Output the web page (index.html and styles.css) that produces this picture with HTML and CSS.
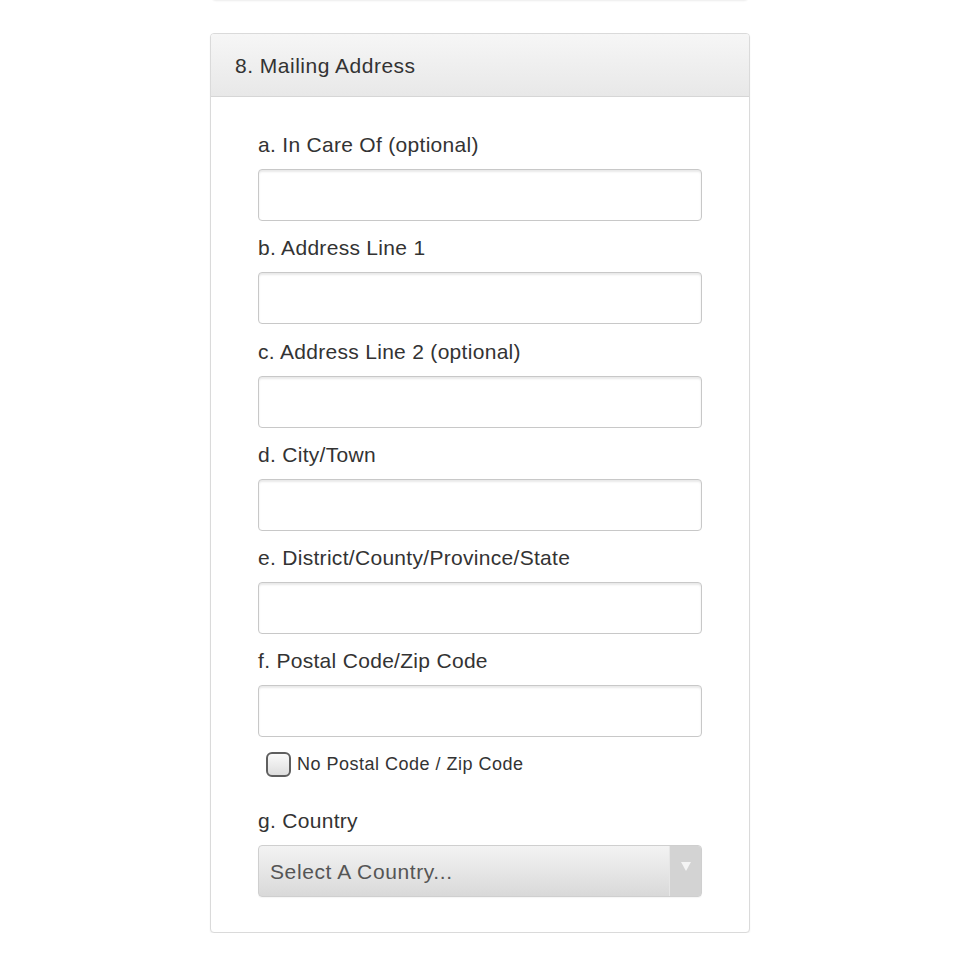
FILE: index.html
```html
<!DOCTYPE html>
<html>
<head>
<meta charset="utf-8">
<link rel="stylesheet" href="styles.css">
</head>
<body>
<div class="wrap">
  <div class="prev-panel"></div>
  <div class="panel">
    <div class="panel-heading">8. Mailing Address</div>
    <div class="panel-body">
      <div class="group">
        <label class="lbl">a. In Care Of (optional)</label>
        <div class="input"></div>
      </div>
      <div class="group">
        <label class="lbl">b. Address Line 1</label>
        <div class="input"></div>
      </div>
      <div class="group">
        <label class="lbl">c. Address Line 2 (optional)</label>
        <div class="input"></div>
      </div>
      <div class="group">
        <label class="lbl">d. City/Town</label>
        <div class="input"></div>
      </div>
      <div class="group">
        <label class="lbl">e. District/County/Province/State</label>
        <div class="input"></div>
      </div>
      <div class="group last-input">
        <label class="lbl">f. Postal Code/Zip Code</label>
        <div class="input"></div>
      </div>
      <div class="check-row">
        <span class="checkbox"></span>
        <span class="check-text">No Postal Code / Zip Code</span>
      </div>
      <div class="group country">
        <label class="lbl">g. Country</label>
        <div class="select">
          <span class="select-text">Select A Country...</span>
          <span class="select-arrow"><span class="tri"></span></span>
        </div>
      </div>
    </div>
  </div>
</div>
</body>
</html>
```

FILE: styles.css
```css
html, body {
  margin: 0;
  padding: 0;
  background: #fff;
}
body {
  font-family: "Liberation Sans", Arial, sans-serif;
  color: #333;
}
.wrap {
  width: 540px;
  margin-left: 210px;
}
.prev-panel {
  margin: -12px 2px 0 2px;
  height: 11px;
  border: 1px solid #dcdcdc;
  border-top: none;
  border-radius: 0 0 4px 4px;
  box-shadow: 0 1px 2px rgba(0,0,0,0.08);
}
.panel {
  margin-top: 33px;
  border: 1px solid #dadada;
  border-radius: 4px;
  box-shadow: 0 1px 2px rgba(0,0,0,0.06);
  background: #fff;
}
.panel-heading {
  height: 63px;
  box-sizing: border-box;
  padding: 1px 24px 0 24px;
  display: flex;
  align-items: center;
  font-size: 21px;
  letter-spacing: 0.5px;
  color: #333;
  background: linear-gradient(to bottom, #f6f6f6, #e8e8e8);
  border-bottom: 1px solid #d6d6d6;
  border-radius: 3px 3px 0 0;
}
.panel-body {
  padding: 36px 47px 35px 47px;
}
.group {
  display: flex;
  flex-direction: column;
  margin-bottom: 15.3px;
}
.lbl {
  font-size: 21px;
  letter-spacing: 0.3px;
  line-height: 24px;
  height: 24px;
  margin-bottom: 12px;
  color: #333;
}
.input {
  height: 52px;
  box-sizing: border-box;
  border: 1px solid #c8c8c8;
  border-radius: 4px;
  background: #fff;
  box-shadow: inset 0 2px 2px rgba(0,0,0,0.09);
}
.group.last-input {
  margin-bottom: 15px;
}
.check-row {
  display: flex;
  align-items: center;
  margin-left: 8px;
  height: 25px;
}
.checkbox {
  width: 25px;
  height: 25px;
  box-sizing: border-box;
  border: 2px solid #5f5f5f;
  border-radius: 6px;
  background: linear-gradient(to bottom, #fafafa, #dedede);
  margin-right: 6px;
}
.check-text {
  font-size: 18px;
  letter-spacing: 0.5px;
  color: #333;
  line-height: 20px;
  position: relative;
  top: -1px;
}
.group.country {
  margin-top: 32px;
  margin-bottom: 0;
}
.select {
  height: 52px;
  box-sizing: border-box;
  border: 1px solid #cfcfcf;
  border-radius: 4px;
  background: linear-gradient(to bottom, #f3f3f3, #d9d9d9);
  display: flex;
  align-items: stretch;
  box-shadow: 0 1px 1px rgba(0,0,0,0.04);
}
.select-text {
  flex: 1;
  display: flex;
  align-items: center;
  padding-left: 11px;
  padding-top: 2px;
  font-size: 21px;
  letter-spacing: 0.6px;
  color: #555;
}
.select-arrow {
  width: 32px;
  border-left: 1px solid #e6e6e6;
  background: #d3d3d3;
  border-radius: 0 3px 3px 0;
  display: flex;
  justify-content: center;
  padding-top: 16px;
  box-sizing: border-box;
}
.tri {
  width: 0;
  height: 0;
  border-left: 5px solid transparent;
  border-right: 5px solid transparent;
  border-top: 9px solid #f4f4f4;
}
```
